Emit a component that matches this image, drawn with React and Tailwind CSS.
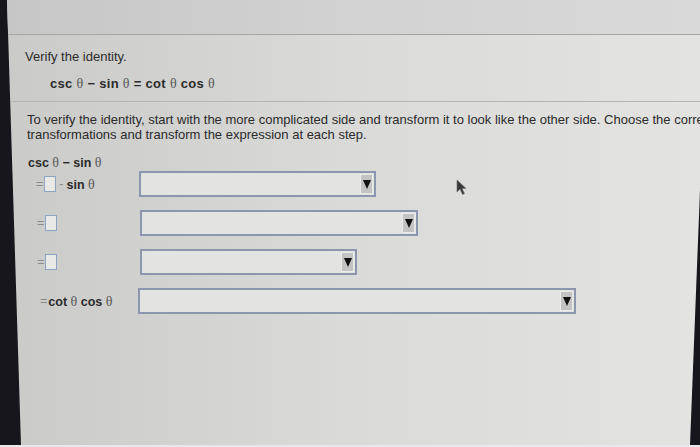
import React from "react";

const Th = () => (
  <span className="font-['Liberation_Serif',serif] font-normal text-[#5a5a5a] text-[14px]">θ</span>
);

const Box = () => (
  <span className="inline-block w-[12px] h-[16px] border border-[#8fa2c0] bg-[#e9e9e7] align-middle" />
);

function Dropdown({ className }) {
  return (
    <div className={"h-[26px] border-2 border-[#8d96ae] bg-[#e3e3e1] flex justify-end p-[1px] " + className}>
      <div className="w-[13px] bg-[#c3c3c3] border border-[#ebebeb] flex items-center justify-center">
        <svg width="8" height="9" viewBox="0 0 8 9">
          <polygon points="0,0 8,0 4,9" fill="#111" />
        </svg>
      </div>
    </div>
  );
}

export default function App() {
  return (
    <div className="w-[700px] h-[447px] bg-[#16161c] overflow-hidden font-['Liberation_Sans',Arial,sans-serif] text-[#2b2b2b]">
      <div className="relative w-[700px] h-[445px] bg-gradient-to-r from-[#cacac8] via-[#dadad8] to-[#e3e3e1] [clip-path:polygon(7px_0,700px_0,700px_190px,690px_445px,21px_445px)]">
        <div className="h-[35px] bg-gradient-to-r from-[#c6c6c6] via-[#d2d2d2] to-[#d9d9d9] border-b border-[#a6a6a6]" />
        <div className="pl-[25px] pt-[14px] text-[13px] leading-[16px]">Verify the identity.</div>
        <div className="pl-[50px] pt-[11px] text-[13px] leading-[16px] font-bold whitespace-nowrap tracking-[0.3px]">
          csc <Th /> − sin <Th /> = cot <Th /> cos <Th />
        </div>
        <div className="mt-[9px] border-b border-[#b4b4b4]" />
        <div className="pl-[27px] pt-[10px] text-[13px] leading-[15px] whitespace-nowrap">
          <div>To verify the identity, start with the more complicated side and transform it to look like the other side. Choose the correct</div>
          <div>transformations and transform the expression at each step.</div>
        </div>
        <div className="pl-[28px] pt-[13px] text-[12.5px] leading-[16px] font-bold whitespace-nowrap">
          csc <Th /> − sin <Th />
        </div>
        <div className="pl-[36px] flex flex-col gap-[13px] text-[12.5px] font-bold">
          <div className="flex items-center h-[26px]">
            <div className="w-[103px] flex items-center whitespace-nowrap">
              <span className="text-[#8a8a8a] font-normal mr-[1px]">=</span>
              <Box />
              <span className="text-[#8a8a8a] font-normal mx-[3px]">-</span>
              <span>sin <Th /></span>
            </div>
            <Dropdown className="w-[237px]" />
          </div>
          <div className="flex items-center h-[26px]">
            <div className="w-[104px] pl-[1px] flex items-center">
              <span className="text-[#8a8a8a] font-normal mr-[1px]">=</span>
              <Box />
            </div>
            <Dropdown className="w-[278px]" />
          </div>
          <div className="flex items-center h-[26px]">
            <div className="w-[104px] pl-[1px] flex items-center">
              <span className="text-[#8a8a8a] font-normal mr-[1px]">=</span>
              <Box />
            </div>
            <Dropdown className="w-[217px]" />
          </div>
          <div className="flex items-center h-[26px]">
            <div className="w-[102px] pl-[4px] flex items-center whitespace-nowrap">
              <span className="text-[#8a8a8a] font-normal mr-[1px]">=</span>
              <span>cot <Th /> cos <Th /></span>
            </div>
            <Dropdown className="w-[438px]" />
          </div>
        </div>
        <svg className="absolute left-[456px] top-[179px]" width="12" height="17" viewBox="0 0 12 17">
          <path d="M1 1 L1 13 L4 10 L6.5 15.5 L8.5 14.5 L6 9.5 L10 9.5 Z" fill="#3a3a3a" stroke="#6a6a6a" strokeWidth="0.6" />
        </svg>
      </div>
      <div className="h-[2px] bg-[#e8e8ea]" />
    </div>
  );
}
